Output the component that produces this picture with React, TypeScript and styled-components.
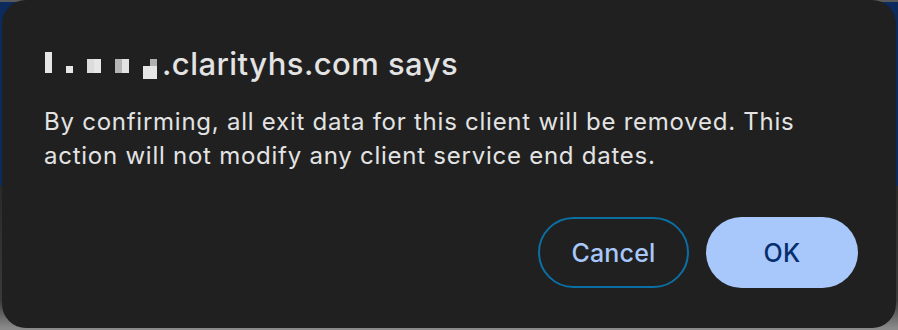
import React from "react";
import styled, { createGlobalStyle } from "styled-components";

const Global = createGlobalStyle`
  html, body { margin: 0; padding: 0; }
  body {
    width: 898px;
    height: 330px;
    overflow: hidden;
    background: linear-gradient(to bottom, #5a5a5a 0px, #5a5a5a 2px, #0d2a5c 2px, #0d2a5c 186px, #2a2a2a 186px, #3a3a3a 300px, #8a8a8a 328px);
    font-family: Inter, "Noto Sans", sans-serif;
  }
`;

const Dialog = styled.div`
  box-sizing: border-box;
  width: 894px;
  height: 328px;
  margin: 0 2px 2px 2px;
  background: #202020;
  border-radius: 24px;
  padding: 44px 38px 40px 42px;
  display: flex;
  flex-direction: column;
  color: #e3e3e3;
`;

const Title = styled.h1`
  margin: 0;
  display: flex;
  align-items: flex-end;
  font-size: 31px;
  font-weight: 500;
  line-height: 40px;
  color: #e3e3e3;
  letter-spacing: 0.45px;
`;

const Redacted = styled.svg`
  display: block;
  margin-right: 2px;
  margin-bottom: 5px;
  flex: none;
`;

const Message = styled.p`
  margin: 21px 0 0 0;
  font-size: 24px;
  line-height: 34px;
  font-weight: 400;
  letter-spacing: 0.75px;
  color: #e3e3e3;
  max-width: 808px;
`;

const Actions = styled.div`
  margin-top: auto;
  display: flex;
  justify-content: flex-end;
  gap: 17px;
`;

const Button = styled.button<{ $primary?: boolean }>`
  box-sizing: border-box;
  height: 71px;
  width: ${(p) => (p.$primary ? "152px" : "151px")};
  border-radius: 36px;
  font-family: Inter, "Noto Sans", sans-serif;
  font-size: 25px;
  font-weight: 500;
  letter-spacing: 0.2px;
  cursor: pointer;
  border: ${(p) => (p.$primary ? "none" : "2px solid #0b6fa4")};
  background: ${(p) => (p.$primary ? "#a8c7fa" : "transparent")};
  color: ${(p) => (p.$primary ? "#062e6f" : "#a8c7fa")};
`;

export default function App() {
  return (
    <>
      <Global />
      <Dialog role="alertdialog">
        <Title>
          <Redacted width="116" height="29" viewBox="0 0 116 29">
            <rect x="1" y="2" width="7" height="21" fill="#e6e6e6" />
            <rect x="22" y="16" width="7" height="7" fill="#e6e6e6" />
            <rect x="43" y="9" width="7" height="14" fill="#dcdcdc" />
            <rect x="50" y="9" width="7" height="14" fill="#e6e6e6" />
            <rect x="71" y="9" width="7" height="14" fill="#b5b5b5" />
            <rect x="78" y="9" width="7" height="14" fill="#e2e2e2" />
            <rect x="106" y="9" width="7" height="7" fill="#b0b0b0" />
            <rect x="99" y="16" width="14" height="14" fill="#e6e6e6" />
          </Redacted>
          <span>.clarityhs.com says</span>
        </Title>
        <Message>
          By confirming, all exit data for this client will be removed. This action will not modify any client service end dates.
        </Message>
        <Actions>
          <Button>Cancel</Button>
          <Button $primary>OK</Button>
        </Actions>
      </Dialog>
    </>
  );
}
